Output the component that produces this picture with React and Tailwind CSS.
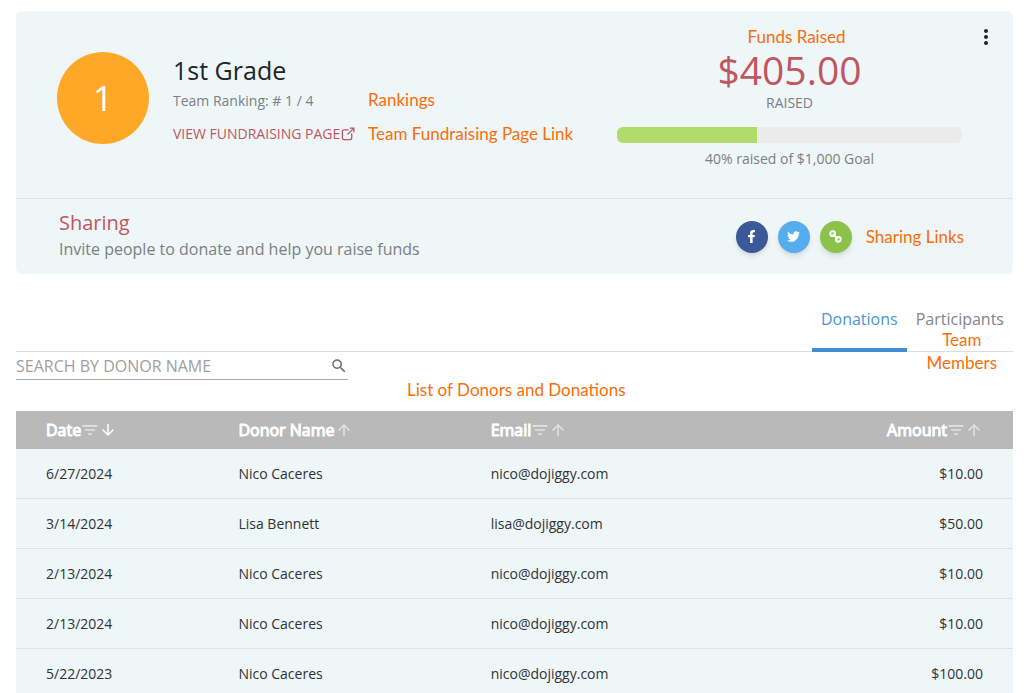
import React, { useState } from "react";
import { FaFacebookF, FaTwitter } from "react-icons/fa";
import {
  MdMoreVert,
  MdSearch,
  MdFilterList,
  MdArrowUpward,
  MdArrowDownward,
} from "react-icons/md";

// Two chain rings joined on the diagonal
function ChainIcon({ size }) {
  return (
    <svg width={size} height={size} viewBox="0 0 14 14" fill="none" stroke="currentColor">
      <circle cx="4" cy="4" r="2.600" strokeWidth="2" />
      <circle cx="10" cy="10" r="2.600" strokeWidth="2" />
      <path d="M4.800 4.800L9.200 9.200" strokeWidth="2" strokeLinecap="round" />
    </svg>
  );
}

// --- DATA ---
const GOAL_PERCENT = 40.5;

const SHARE_LINKS = [
  { name: "Share on Facebook", icon: FaFacebookF, bg: "bg-[#3b5998]" },
  { name: "Share on Twitter", icon: FaTwitter, bg: "bg-[#55acee]" },
  { name: "Copy link", icon: ChainIcon, bg: "bg-[#8bc34a]" },
];

const COLUMNS = [
  { label: "Date", width: "w-[19.3%]", filter: true, sorted: true },
  { label: "Donor Name", width: "w-[25.3%]" },
  { label: "Email", width: "w-[30%]", filter: true },
  { label: "Amount", filter: true, right: true },
];

const DONATIONS = [
  { date: "6/27/2024", name: "Nico Caceres", email: "nico@dojiggy.com", amount: "$10.00" },
  { date: "3/14/2024", name: "Lisa Bennett", email: "lisa@dojiggy.com", amount: "$50.00" },
  { date: "2/13/2024", name: "Nico Caceres", email: "nico@dojiggy.com", amount: "$10.00" },
  { date: "2/13/2024", name: "Nico Caceres", email: "nico@dojiggy.com", amount: "$10.00" },
  { date: "5/22/2023", name: "Nico Caceres", email: "nico@dojiggy.com", amount: "$100.00" },
];

// Orange callout text
function Note({ children, className = "leading-5" }) {
  return (
    <span
      className={`font-['Lato','Open_Sans',sans-serif] text-[17px] text-[#f96d0a] ${className}`}
    >
      {children}
    </span>
  );
}

function ExternalIcon() {
  return (
    <svg
      width="14"
      height="14"
      viewBox="0 0 15 15"
      fill="none"
      stroke="currentColor"
      strokeWidth="1.4"
      className="ml-px shrink-0"
      aria-hidden="true"
    >
      <path d="M8 3H3.500Q1.500 3 1.500 5V11.500Q1.500 13.500 3.500 13.500H9.500Q11.500 13.500 11.500 11.500V7" />
      <path d="M7 8L13.500 1.500M9.500 1.200H13.800V5.500" />
    </svg>
  );
}

function TeamSummary() {
  return (
    <div className="flex items-start border-b border-[#dbe3e6] pt-4 pr-[15px] pb-[29px] pl-[41px]">
      <div className="mt-[25px] flex size-[92px] shrink-0 items-center justify-center rounded-full bg-[#ffa726] text-[35px] text-white">
        1
      </div>

      <div className="mt-[27px] ml-6 flex-1">
        <h1 className="text-[25px] leading-8 text-[#212529]">1st Grade</h1>
        <div className="mt-1 flex items-end gap-[13px]">
          <div className="flex w-[182px] flex-col gap-[13px]">
            <p className="text-[14px] leading-5 text-[#7b8083]">Team Ranking: # 1 / 4</p>
            <a
              href="#page"
              className="flex items-center text-[14px] leading-5 whitespace-nowrap text-[#c0565f]"
            >
              VIEW FUNDRAISING PAGE
              <ExternalIcon />
            </a>
          </div>
          <div className="flex flex-col gap-[14px]">
            <Note>Rankings</Note>
            <Note>Team Fundraising Page Link</Note>
          </div>
        </div>
      </div>

      <div className="flex w-[345px] shrink-0 flex-col text-center">
        <Note className="pl-[14px] leading-5">Funds Raised</Note>
        <p className="text-[39px] leading-[46px] text-[#c0565f]">$405.00</p>
        <p className="text-[14px] leading-5 text-[#7b8083]">RAISED</p>
        <div className="mt-[14px] h-4 overflow-hidden rounded-md bg-[#ebebeb]">
          <div className="h-full bg-[#b1db6b]" style={{ width: `${GOAL_PERCENT}%` }} />
        </div>
        <p className="mt-[6px] text-[14px] leading-5 text-[#7b8083]">
          40% raised of $1,000 Goal
        </p>
      </div>

      <button
        type="button"
        aria-label="More options"
        className="ml-3 flex h-5 items-center text-[#212529]"
      >
        <MdMoreVert size={24} />
      </button>
    </div>
  );
}

function SharingBar() {
  return (
    <div className="flex h-[75px] items-center pr-[49px] pl-[43px]">
      <div className="flex-1 pb-1">
        <h2 className="text-[20px] leading-7 text-[#c0565f]">Sharing</h2>
        <p className="text-[16px] leading-6 text-[#7b8083]">
          Invite people to donate and help you raise funds
        </p>
      </div>
      <div className="flex items-center gap-[10px]">
        {SHARE_LINKS.map(({ name, icon: Icon, bg }) => (
          <button
            key={name}
            type="button"
            aria-label={name}
            className={`flex size-8 items-center justify-center rounded-full text-white shadow-md ${bg}`}
          >
            <Icon size={13} />
          </button>
        ))}
      </div>
      <Note className="ml-[14px] leading-5">Sharing Links</Note>
    </div>
  );
}

function Tabs() {
  const [active, setActive] = useState("Donations");
  const tab = (name) =>
    `-mb-px h-[52px] border-b-4 px-[9px] pb-[10px] text-[16px] leading-6 ${
      active === name ? "border-[#3f8fd2] text-[#4a96d2]" : "border-transparent text-[#858585]"
    }`;

  return (
    <div role="tablist" className="mt-[26px] flex justify-end border-b border-[#dcdcdc]">
      <button
        type="button"
        role="tab"
        aria-selected={active === "Donations"}
        className={tab("Donations")}
        onClick={() => setActive("Donations")}
      >
        Donations
      </button>
      <div className="relative">
        <button
          type="button"
          role="tab"
          aria-selected={active === "Participants"}
          className={tab("Participants")}
          onClick={() => setActive("Participants")}
        >
          Participants
        </button>
        <Note className="pointer-events-none absolute top-7 right-3 left-4 text-center leading-[23px]">
          Team Members
        </Note>
      </div>
    </div>
  );
}

function DonationTable() {
  const cell = "border-b border-[#dbe3e6] px-[30px]";

  return (
    <table className="w-full table-fixed border-separate border-spacing-0 text-left">
      <thead>
        <tr className="h-[38px] bg-[#b9b9b9] text-white">
          {COLUMNS.map((col) => (
            <th
              key={col.label}
              scope="col"
              className={`px-[30px] text-[16px] font-normal ${col.width ?? ""}`}
            >
              <div className={`flex items-center ${col.right ? "justify-end" : ""}`}>
                <span className="[-webkit-text-stroke:1px_white]">{col.label}</span>
                {col.filter && <MdFilterList size={20} className="-mx-px opacity-60" />}
                {col.sorted ? (
                  <MdArrowDownward size={18} />
                ) : (
                  <MdArrowUpward size={18} className="opacity-60" />
                )}
              </div>
            </th>
          ))}
        </tr>
      </thead>
      <tbody>
        {DONATIONS.map((row, i) => (
          <tr key={i} className="h-[50px] bg-[#eef6f8] text-[14px] text-[#303437]">
            <td className={cell}>{row.date}</td>
            <td className={cell}>{row.name}</td>
            <td className={cell}>{row.email}</td>
            <td className={`${cell} text-right`}>{row.amount}</td>
          </tr>
        ))}
      </tbody>
    </table>
  );
}

export default function App() {
  return (
    <main className="h-screen overflow-hidden bg-white pt-[11px] pr-[11px] pl-4 font-['Open_Sans','Noto_Sans',sans-serif]">
      <section className="rounded-md bg-[#eef6f8]">
        <TeamSummary />
        <SharingBar />
      </section>

      <Tabs />

      <div className="flex h-[59px] items-start">
        <label className="flex h-7 w-[332px] items-center border-b border-[#a8a8a8]">
          <input
            type="search"
            aria-label="Search by donor name"
            placeholder="SEARCH BY DONOR NAME"
            className="min-w-0 flex-1 text-[16px] leading-6 outline-none placeholder:text-[#a0a0a0]"
          />
          <MdSearch size={18} className="text-[#6b6b6b]" />
        </label>
        <Note className="mt-7 ml-[59px] leading-5">List of Donors and Donations</Note>
      </div>

      <DonationTable />
    </main>
  );
}
